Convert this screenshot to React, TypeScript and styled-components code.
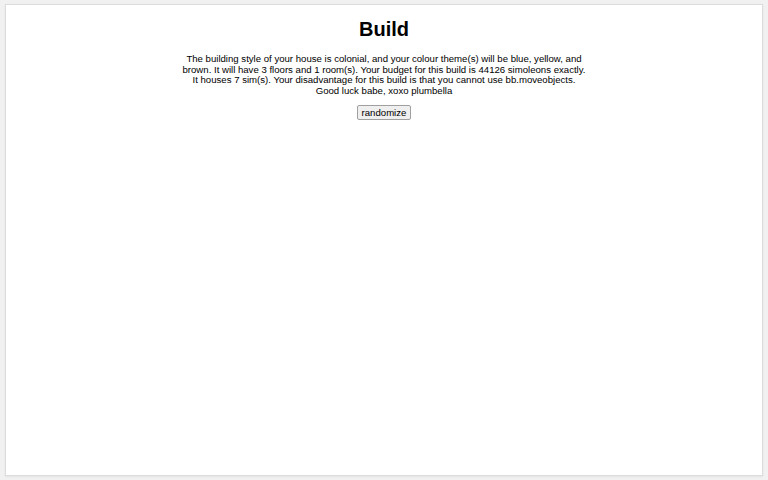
import styled, { createGlobalStyle } from 'styled-components';

const GlobalStyle = createGlobalStyle`
  html, body {
    margin: 0;
    padding: 0;
    background: #f1f1f1;
    font-family: "Liberation Sans", Arial, sans-serif;
  }
`;

const Page = styled.div`
  height: 480px;
  box-sizing: border-box;
  padding: 4px 5px 4px 5px;
  display: flex;
`;

const Panel = styled.main`
  flex: 1;
  background: #ffffff;
  border: 1px solid #dcdcdc;
  box-shadow: 0 1px 2px rgba(0, 0, 0, 0.06);
  display: flex;
  flex-direction: column;
  align-items: center;
  padding-top: 14px;
`;

const Title = styled.h1`
  margin: 0;
  font-size: 20px;
  line-height: 20px;
  font-weight: bold;
  color: #000;
`;

const Blurb = styled.p`
  margin: 15px 0 0;
  font-size: 9.6px;
  line-height: 10.67px;
  text-align: center;
  color: #000;
  white-space: nowrap;
`;

const RandomButton = styled.button`
  margin-top: 8px;
  font-family: "Liberation Sans", Arial, sans-serif;
  font-size: 9.6px;
  padding: 1px 4px;
  height: 15px;
  line-height: 11px;
  background: #efefef;
  border: 1px solid #a0a0a0;
  border-radius: 2px;
  color: #000;
`;

const lines = [
  'The building style of your house is colonial, and your colour theme(s) will be blue, yellow, and',
  'brown. It will have 3 floors and 1 room(s). Your budget for this build is 44126 simoleons exactly.',
  'It houses 7 sim(s). Your disadvantage for this build is that you cannot use bb.moveobjects.',
  'Good luck babe, xoxo plumbella',
];

export default function App() {
  return (
    <>
      <GlobalStyle />
      <Page>
        <Panel>
          <Title>Build</Title>
          <Blurb>
            {lines.map((line, i) => (
              <span key={i}>
                {line}
                {i < lines.length - 1 && <br />}
              </span>
            ))}
          </Blurb>
          <RandomButton>randomize</RandomButton>
        </Panel>
      </Page>
    </>
  );
}
